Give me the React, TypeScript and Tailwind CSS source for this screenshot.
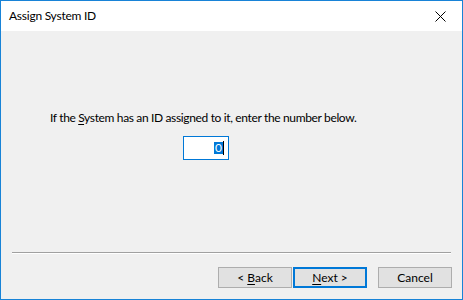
import React from "react";

const font = { fontFamily: '"Segoe UI", Lato, "Noto Sans", sans-serif' };

export default function App() {
  return (
    <div
      className="w-[463px] h-[300px] border border-[#1883d7] bg-[#f0f0f0] flex flex-col text-[12px] text-black"
      style={font}
    >
      <div className="h-[30px] bg-white flex items-center justify-between pl-[8px] pr-[16px]">
        <span className="text-[12px] leading-none tracking-[-0.25px]">Assign System ID</span>
        <svg width="11" height="11" viewBox="0 0 11 11" className="shrink-0">
          <path d="M0.5 0.5 L10.5 10.5 M10.5 0.5 L0.5 10.5" stroke="#000" strokeWidth="1" fill="none" />
        </svg>
      </div>

      <div className="flex-1 flex flex-col">
        <div className="h-[79px]" />
        <p className="pl-[49px] leading-[16px] tracking-[-0.35px]">
          If the <span className="underline underline-offset-2">S</span>ystem has an ID assigned to it, enter the number below.
        </p>
        <div className="pl-[182px] pt-[10px]">
          <div className="w-[46px] h-[24px] border border-[#0078d7] bg-white flex items-center justify-end pr-[4px]">
            <span className="bg-[#0078d7] text-white leading-[12px] px-[1px] h-[12px] text-[12px]">0</span>
            <span className="w-px h-[14px] bg-black" />
          </div>
        </div>
        <div className="flex-1" />
        <div className="mx-[11px] border-t border-[#a0a0a0] border-b border-b-white" />
        <div className="flex justify-end items-center pr-[10px] pt-[13px] pb-[11px]">
          <button className="w-[74px] h-[21px] bg-[#e1e1e1] border border-[#adadad] leading-none">
            &lt; <span className="underline underline-offset-2">B</span>ack
          </button>
          <button className="ml-[1px] w-[74px] h-[21px] bg-[#e1e1e1] border-2 border-[#0078d7] leading-none">
            <span className="underline underline-offset-2">N</span>ext &gt;
          </button>
          <button className="ml-[11px] w-[74px] h-[21px] bg-[#e1e1e1] border border-[#adadad] leading-none">
            Cancel
          </button>
        </div>
      </div>
    </div>
  );
}
